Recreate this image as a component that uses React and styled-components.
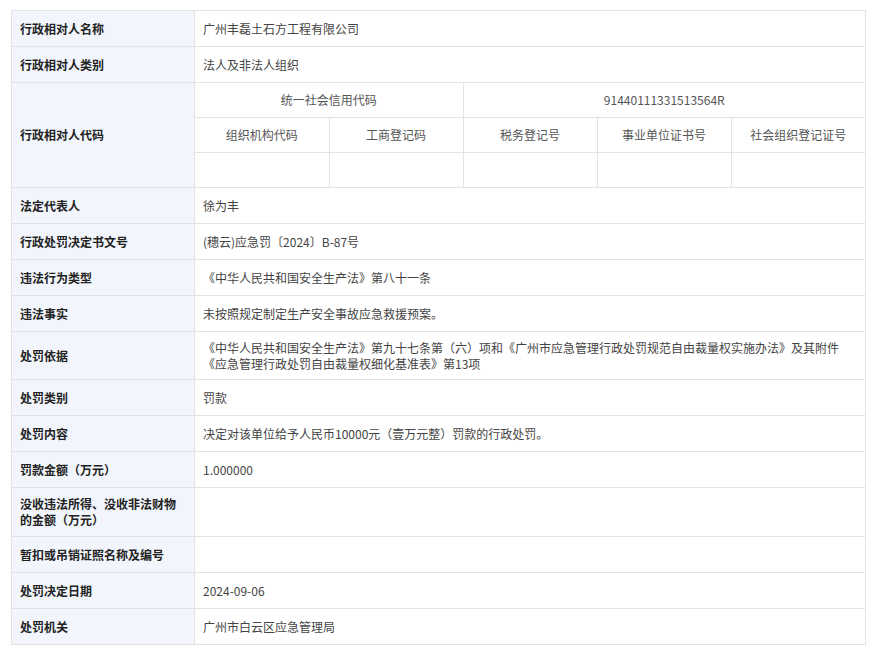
import React from 'react';
import styled, { createGlobalStyle } from 'styled-components';

const Global = createGlobalStyle`
  body {
    margin: 0;
    background: #fff;
    font-family: "Microsoft YaHei", "Noto Sans CJK SC", sans-serif;
  }
`;

const Wrap = styled.div`
  padding: 10px 11px 0 11px;
`;

const Table = styled.table`
  width: 855px;
  border-collapse: collapse;
  table-layout: fixed;
  font-size: 12px;
  color: #333;

  td {
    border: 1px solid #e3e3e3;
    padding: 0 8px;
    line-height: 16px;
  }
`;

const Label = styled.td`
  width: 166px;
  background: #f2f6fc;
  font-weight: bold;
  color: #222;
  height: ${(p) => p.h || 35}px;
`;

const Value = styled.td`
  color: #444;
`;

const Inner = styled.table`
  width: 100%;
  border-collapse: collapse;
  table-layout: fixed;
  td {
    border: none;
    border-left: 1px solid #e3e3e3;
    border-bottom: 1px solid #e3e3e3;
    text-align: center;
    height: 34px;
    color: #555;
  }
  tr td:first-child {
    border-left: none;
  }
  tr:last-child td {
    border-bottom: none;
  }
`;

const Cell = styled.td`
  padding: 0 !important;
`;

const rows = [
  ['法定代表人', '徐为丰'],
  ['行政处罚决定书文号', '(穗云)应急罚〔2024〕B-87号'],
  ['违法行为类型', '《中华人民共和国安全生产法》第八十一条'],
  ['违法事实', '未按照规定制定生产安全事故应急救援预案。'],
  ['处罚依据', '《中华人民共和国安全生产法》第九十七条第（六）项和《广州市应急管理行政处罚规范自由裁量权实施办法》及其附件《应急管理行政处罚自由裁量权细化基准表》第13项', 47],
  ['处罚类别', '罚款'],
  ['处罚内容', '决定对该单位给予人民币10000元（壹万元整）罚款的行政处罚。'],
  ['罚款金额（万元）', '1.000000'],
  ['没收违法所得、没收非法财物的金额（万元）', '', 48],
  ['暂扣或吊销证照名称及编号', ''],
  ['处罚决定日期', '2024-09-06'],
  ['处罚机关', '广州市白云区应急管理局'],
];

export default function App() {
  return (
    <Wrap>
      <Global />
      <Table>
        <tbody>
          <tr><Label>行政相对人名称</Label><Value>广州丰磊土石方工程有限公司</Value></tr>
          <tr><Label>行政相对人类别</Label><Value>法人及非法人组织</Value></tr>
          <tr>
            <Label h={104}>行政相对人代码</Label>
            <Cell>
              <Inner>
                <tbody>
                  <tr>
                    <td colSpan={2}>统一社会信用代码</td>
                    <td colSpan={3}>91440111331513564R</td>
                  </tr>
                  <tr>
                    <td>组织机构代码</td><td>工商登记码</td><td>税务登记号</td>
                    <td>事业单位证书号</td><td>社会组织登记证号</td>
                  </tr>
                  <tr><td /><td /><td /><td /><td /></tr>
                </tbody>
              </Inner>
            </Cell>
          </tr>
          {rows.map(([k, v, h]) => (
            <tr key={k}><Label h={h}>{k}</Label><Value>{v}</Value></tr>
          ))}
        </tbody>
      </Table>
    </Wrap>
  );
}
